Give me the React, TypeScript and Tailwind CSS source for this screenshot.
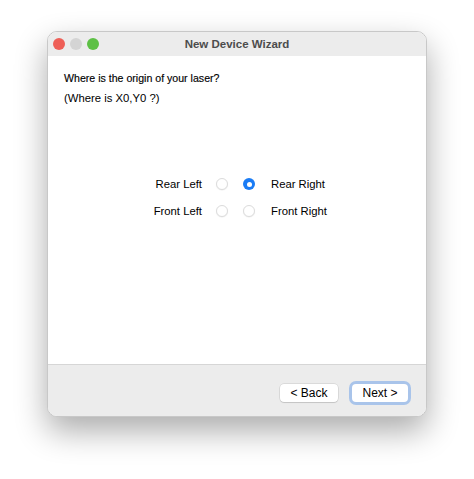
export default function App() {
  const font = { fontFamily: '"Liberation Sans", Arial, sans-serif' };
  return (
    <div className="w-[474px] h-[479px] bg-white pt-[31px] pl-[47px]" style={font}>
      <div className="w-[380px] h-[386px] rounded-[10px] overflow-hidden flex flex-col bg-white border border-[#c8c8c8] shadow-[0_14px_32px_rgba(0,0,0,0.33)]">
        {/* title bar */}
        <div className="h-[24px] shrink-0 bg-[#ececec] relative flex items-center justify-center">
          <div className="absolute left-[5px] top-[6px] flex gap-[5px]">
            <span className="w-[12px] h-[12px] rounded-full bg-[#ee5f57]" />
            <span className="w-[12px] h-[12px] rounded-full bg-[#d4d4d4]" />
            <span className="w-[12px] h-[12px] rounded-full bg-[#5dc045]" />
          </div>
          <span className="text-[11.5px] font-bold text-[#4c4c4c] pt-[1px]">New Device Wizard</span>
        </div>

        {/* content */}
        <div className="flex-1 bg-white pl-[16px] pt-[15px]">
          <p className="text-[10.6px] text-black leading-[14px] [-webkit-text-stroke:0.15px_black]">Where is the origin of your laser?</p>
          <p className="text-[11.3px] text-black leading-[16px] mt-[5px]">(Where is X0,Y0 ?)</p>

          <div className="mt-[70px] grid grid-cols-[138px_26px_27px_auto] items-center gap-y-[11px] text-[11.3px] text-black leading-[16px]">
            <span className="text-right">Rear Left</span>
            <span className="flex justify-end"><Radio /></span>
            <span className="flex justify-end"><Radio checked /></span>
            <span className="pl-[16px]">Rear Right</span>
            <span className="text-right">Front Left</span>
            <span className="flex justify-end"><Radio /></span>
            <span className="flex justify-end"><Radio /></span>
            <span className="pl-[16px]">Front Right</span>
          </div>
        </div>

        {/* footer */}
        <div className="h-[52px] shrink-0 bg-[#ececec] border-t border-[#d6d6d6] flex items-center justify-end gap-[14px] pr-[18px] pt-[4px]">
          <button className="w-[58px] h-[18px] rounded-[4px] bg-white text-[12px] leading-[16px] text-black shadow-[0_0_0_0.5px_rgba(0,0,0,0.15),0_1px_1px_rgba(0,0,0,0.1)]">
            &lt; Back
          </button>
          <button className="w-[56px] h-[18px] rounded-[4px] bg-white text-[12px] leading-[16px] text-black shadow-[0_0_0_3px_#a9c4ea,0_1px_1px_rgba(0,0,0,0.1)]">
            Next &gt;
          </button>
        </div>
      </div>
    </div>
  );
}

function Radio({ checked = false }: { checked?: boolean }) {
  if (checked) {
    return (
      <span className="w-[12px] h-[12px] rounded-full bg-[#1a7cf5] flex items-center justify-center">
        <span className="w-[5px] h-[5px] rounded-full bg-white" />
      </span>
    );
  }
  return <span className="w-[12px] h-[12px] rounded-full bg-white border border-[#dcdcdc] shadow-[0_0.5px_1px_rgba(0,0,0,0.08)]" />;
}
